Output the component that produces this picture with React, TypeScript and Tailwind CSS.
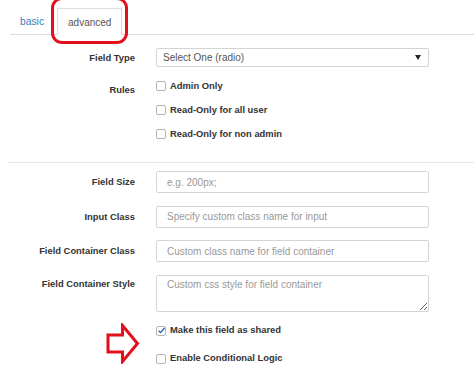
import React from 'react'

const font = { fontFamily: '"Liberation Sans", Arial, sans-serif' }

function Label({ children, className = '' }: { children: React.ReactNode; className?: string }) {
  return (
    <div className={`w-[135px] shrink-0 text-right text-[9.4px] font-bold text-[#333] leading-[12px] ${className}`}>
      {children}
    </div>
  )
}

function Check({ label, checked = false }: { label: string; checked?: boolean }) {
  return (
    <div className="flex h-[24px] items-center gap-[4px]">
      <span className="relative flex h-[10px] w-[10px] items-center justify-center rounded-[2px] border border-[#b5b5b5] bg-white">
        {checked && (
          <svg viewBox="0 0 10 10" className="absolute h-[9px] w-[9px]">
            <path d="M1.8 5.2 L4 7.3 L8.4 2.3" fill="none" stroke="#2b6fb8" strokeWidth="1.6" />
          </svg>
        )}
      </span>
      <span className="text-[9.4px] font-bold text-[#333]">{label}</span>
    </div>
  )
}

function Input({ placeholder }: { placeholder: string }) {
  return (
    <input
      placeholder={placeholder}
      className="ml-[21px] block h-[22px] w-[273px] rounded-[2px] border border-[#d4d4d4] bg-white px-[10px] text-[10px] text-[#555] outline-none placeholder:text-[#999]"
    />
  )
}

export default function App() {
  return (
    <div style={font} className="relative h-[382px] w-[474px] overflow-hidden bg-white">
      {/* tabs */}
      <div className="ml-[10px] mt-[8px] flex border-b border-[#dedede]">
        <div className="flex h-[26px] items-center px-[10px] pt-[1px] text-[10.3px] text-[#3a7bbf]">basic</div>
        <div className="-mb-px ml-[3px] flex h-[27px] items-center border-x border-t border-[#dedede] bg-white px-[10px] text-[10px] text-[#555]">
          advanced
        </div>
      </div>

      {/* field type */}
      <div className="mt-[13px] flex items-center">
        <Label>Field Type</Label>
        <div className="ml-[21px] flex h-[19px] w-[273px] items-center justify-between rounded-[2px] border border-[#d4d4d4] pl-[6px] pr-[7px] text-[10px] text-[#555]">
          <span>Select One (radio)</span>
          <svg viewBox="0 0 6 5" className="h-[5px] w-[6px]">
            <path d="M0 0 H6 L3 5 Z" fill="#222" />
          </svg>
        </div>
      </div>

      {/* rules */}
      <div className="mt-[7px] flex">
        <Label className="pt-[10px]">Rules</Label>
        <div className="ml-[21px] flex flex-col">
          <Check label="Admin Only" />
          <Check label="Read-Only for all user" />
          <Check label="Read-Only for non admin" />
        </div>
      </div>

      <div className="ml-[8px] mt-[16px] border-t border-[#e6e6e6]" />

      <div className="mt-[8px] flex flex-col gap-[12.5px]">
        <div className="flex items-center">
          <Label>Field Size</Label>
          <Input placeholder="e.g. 200px;" />
        </div>
        <div className="flex items-center">
          <Label>Input Class</Label>
          <Input placeholder="Specify custom class name for input" />
        </div>
        <div className="flex items-center">
          <Label>Field Container Class</Label>
          <Input placeholder="Custom class name for field container" />
        </div>
        <div className="flex">
          <Label className="pt-[3px]">Field Container Style</Label>
          <textarea
            placeholder="Custom css style for field container"
            className="ml-[21px] block h-[37px] w-[273px] resize-y rounded-[2px] border border-[#d4d4d4] px-[10px] py-[3px] text-[10px] leading-[12px] text-[#555] outline-none placeholder:text-[#999]"
          />
        </div>
      </div>

      <div className="ml-[156px] mt-[7px] flex flex-col gap-[4px]">
        <Check label="Make this field as shared" checked />
        <Check label="Enable Conditional Logic" />
      </div>

      {/* annotations */}
      <div className="pointer-events-none absolute left-[51px] top-[-3px] h-[47px] w-[77px] rounded-[11px] border-[3px] border-[#e2101d]" />
      <svg className="pointer-events-none absolute left-[106px] top-[323px]" width="34" height="41" viewBox="0 0 34 41">
        <path
          d="M2 12 H16.5 V2.5 L31.5 20.5 L16.5 38.5 V29 H2 Z"
          fill="none"
          stroke="#e2101d"
          strokeWidth="3"
          strokeLinejoin="miter"
        />
      </svg>
    </div>
  )
}
